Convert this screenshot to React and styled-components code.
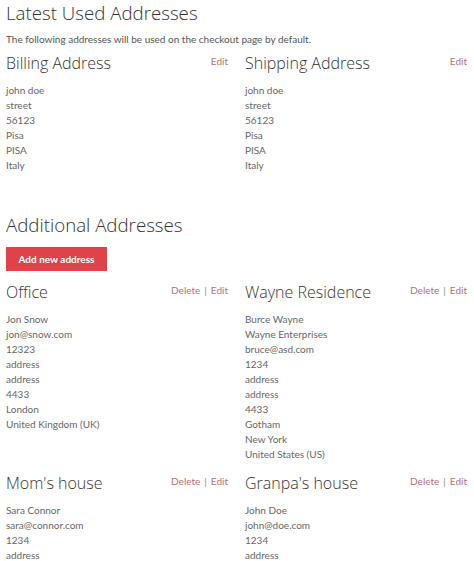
import styled, { createGlobalStyle } from 'styled-components';

const GlobalStyle = createGlobalStyle`
  body {
    margin: 0;
    background: #fff;
    font-family: Lato, "Liberation Sans", sans-serif;
  }
`;

const latest = [
  {
    title: 'Billing Address',
    lines: ['john doe', 'street', '56123', 'Pisa', 'PISA', 'Italy'],
  },
  {
    title: 'Shipping Address',
    lines: ['john doe', 'street', '56123', 'Pisa', 'PISA', 'Italy'],
  },
];

const additional = [
  {
    title: 'Office',
    lines: [
      'Jon Snow',
      'jon@snow.com',
      '12323',
      'address',
      'address',
      '4433',
      'London',
      'United Kingdom (UK)',
    ],
  },
  {
    title: 'Wayne Residence',
    lines: [
      'Burce Wayne',
      'Wayne Enterprises',
      'bruce@asd.com',
      '1234',
      'address',
      'address',
      '4433',
      'Gotham',
      'New York',
      'United States (US)',
    ],
  },
  {
    title: "Mom's house",
    lines: ['Sara Connor', 'sara@connor.com', '1234', 'address'],
  },
  {
    title: "Granpa's house",
    lines: ['John Doe', 'john@doe.com', '1234', 'address'],
  },
];

const AddressCard = ({ address, deletable }) => (
  <Card>
    <CardHeader>
      <CardTitle>{address.title}</CardTitle>
      <Actions>
        {deletable && (
          <>
            <ActionLink href="#">Delete</ActionLink>
            <Sep>|</Sep>
          </>
        )}
        <ActionLink href="#">Edit</ActionLink>
      </Actions>
    </CardHeader>
    <Lines>
      {address.lines.map((line, i) => (
        <Line key={i}>{line}</Line>
      ))}
    </Lines>
  </Card>
);

const App = () => {
  return (
    <>
      <GlobalStyle />
      <Page>
        <Heading>Latest Used Addresses</Heading>
        <Intro>The following addresses will be used on the checkout page by default.</Intro>
        <Grid>
          {latest.map(a => (
            <AddressCard key={a.title} address={a} />
          ))}
        </Grid>

        <Heading $top="39px">Additional Addresses</Heading>
        <AddButton>Add new address</AddButton>
        <Grid $top="4px" $rowGap="4px">
          {additional.map(a => (
            <AddressCard key={a.title} address={a} deletable />
          ))}
        </Grid>
      </Page>
    </>
  );
};

export default App;

const Page = styled.div`
  padding: 0 7px 0 6px;
  height: 561px;
  overflow: hidden;
`;

const Heading = styled.h1`
  margin: ${p => p.$top || '0'} 0 0;
  font-family: "Open Sans", sans-serif;
  font-weight: 300;
  font-size: 18.7px;
  line-height: 25px;
  color: #333;
`;

const Intro = styled.p`
  margin: 7px 0 0;
  font-size: 10px;
  line-height: 14px;
  color: #555;
`;

const Grid = styled.div`
  display: grid;
  grid-template-columns: 222px 222px;
  column-gap: 17px;
  row-gap: ${p => p.$rowGap || '0'};
  margin-top: ${p => p.$top || '0'};
`;

const Card = styled.div`
  display: flex;
  flex-direction: column;
`;

const CardHeader = styled.div`
  display: flex;
  justify-content: space-between;
  align-items: flex-start;
  margin-top: 6px;
`;

const CardTitle = styled.h2`
  margin: 0;
  font-family: "Open Sans", sans-serif;
  font-weight: 300;
  font-size: 16px;
  line-height: 22px;
  color: #333;
`;

const Actions = styled.div`
  display: flex;
  gap: 4px;
  font-size: 10px;
  line-height: 14px;
  margin-top: 2px;
`;

const ActionLink = styled.a`
  color: #b3707b;
  text-decoration: none;
`;

const Sep = styled.span`
  color: #888;
`;

const Lines = styled.div`
  display: flex;
  flex-direction: column;
  margin-top: 9px;
`;

const Line = styled.div`
  font-size: 10px;
  line-height: 15px;
  color: #666;
`;

const AddButton = styled.button`
  display: block;
  margin-top: 10px;
  width: 101px;
  height: 24px;
  padding: 0;
  border: none;
  background: #e0424a;
  color: #fff;
  font-family: Lato, sans-serif;
  font-weight: 700;
  font-size: 10px;
`;
